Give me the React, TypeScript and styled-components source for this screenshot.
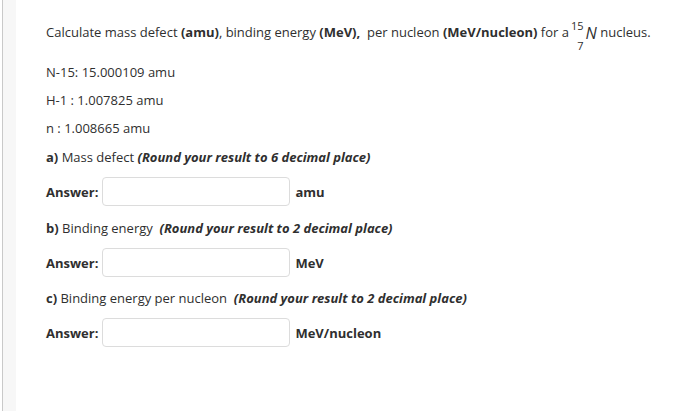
import React from "react";
import styled, { createGlobalStyle } from "styled-components";

const Global = createGlobalStyle`
  html, body { margin: 0; padding: 0; background: #fff; }
  body { font-family: "Open Sans", "Liberation Sans", Arial, sans-serif; color: #2f2f2f; }
`;

const Page = styled.div`
  display: flex;
  min-height: 411px;
`;

const SideStrip = styled.div`
  width: 13px;
  margin-left: 2px;
  border-left: 1px solid #c9c9c9;
  background: #f7f7f7;
  flex: none;
`;

const Content = styled.div`
  display: flex;
  flex-direction: column;
  padding: 23px 0 0 30px;
  font-size: 13px;
  line-height: 18px;
`;

const Header = styled.p`
  margin: 0;
  white-space: pre;
`;

const Nuclide = styled.span`
  display: inline-flex;
  align-items: flex-start;
  vertical-align: middle;
  padding-top: 4px;
  margin: -12px 0 -12px 2px;
`;

const Scripts = styled.span`
  display: inline-flex;
  flex-direction: column;
  align-items: flex-end;
  font-size: 11px;
  line-height: 12px;
  gap: 8px;
`;

const Symbol = styled.span`
  font-style: italic;
  font-size: 16px;
  line-height: 18px;
  margin-top: 4px;
  margin-left: 2px;
`;

const DataLine = styled.p<{ $gap: number }>`
  margin: ${(p) => p.$gap}px 0 0;
`;

const PartLine = styled.p<{ $gap: number }>`
  margin: ${(p) => p.$gap}px 0 0;
  white-space: pre;
`;

const Hint = styled.b`
  font-style: italic;
`;

const AnswerRow = styled.div`
  display: flex;
  align-items: center;
  margin-top: 11px;
`;

const Label = styled.b`
  font-weight: 700;
  margin-right: 4px;
`;

const Field = styled.input`
  box-sizing: border-box;
  width: 188px;
  height: 29px;
  border: 1px solid #dcdcdc;
  border-radius: 4px;
  background: #fff;
  padding: 0 6px;
  font: inherit;
  outline: none;
`;

const Unit = styled.b`
  margin-left: 5px;
`;

const parts = [
  { key: "a", title: " Mass defect ", hint: "(Round your result to 6 decimal place)", unit: "amu", gap: 11 },
  { key: "b", title: " Binding energy  ", hint: "(Round your result to 2 decimal place)", unit: "MeV", gap: 13 },
  { key: "c", title: " Binding energy per nucleon  ", hint: "(Round your result to 2 decimal place)", unit: "MeV/nucleon", gap: 12 },
];

export default function App() {
  return (
    <>
      <Global />
      <Page>
        <SideStrip />
        <Content>
          <Header>
            Calculate mass defect <b>(amu)</b>, binding energy <b>(MeV),</b>  per nucleon{" "}
            <b>(MeV/nucleon)</b> for a
            <Nuclide>
              <Scripts>
                <span>15</span>
                <span>7</span>
              </Scripts>
              <Symbol>N</Symbol>
            </Nuclide>{" "}
            nucleus.
          </Header>
          <DataLine $gap={22}>N-15: 15.000109 amu</DataLine>
          <DataLine $gap={10}>H-1 : 1.007825 amu</DataLine>
          <DataLine $gap={10}>n : 1.008665 amu</DataLine>
          {parts.map((p) => (
            <React.Fragment key={p.key}>
              <PartLine $gap={p.gap}>
                <b>{p.key})</b>
                {p.title}
                <Hint>{p.hint}</Hint>
              </PartLine>
              <AnswerRow>
                <Label>Answer:</Label>
                <Field type="text" />
                <Unit>{p.unit}</Unit>
              </AnswerRow>
            </React.Fragment>
          ))}
        </Content>
      </Page>
    </>
  );
}
